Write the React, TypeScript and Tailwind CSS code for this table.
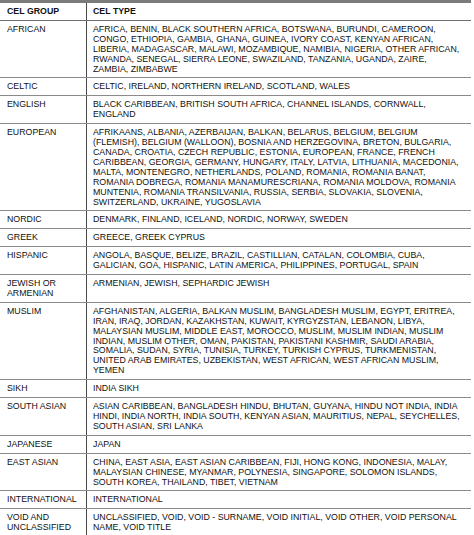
import React from "react";

type Row = { group: string[]; types: string[] };

const rows: Row[] = [
  {
    group: ["AFRICAN"],
    types: [
      "AFRICA, BENIN, BLACK SOUTHERN AFRICA, BOTSWANA, BURUNDI, CAMEROON,",
      "CONGO, ETHIOPIA, GAMBIA, GHANA, GUINEA, IVORY COAST, KENYAN AFRICAN,",
      "LIBERIA, MADAGASCAR, MALAWI, MOZAMBIQUE, NAMIBIA, NIGERIA, OTHER AFRICAN,",
      "RWANDA, SENEGAL, SIERRA LEONE, SWAZILAND, TANZANIA, UGANDA, ZAIRE,",
      "ZAMBIA, ZIMBABWE",
    ],
  },
  { group: ["CELTIC"], types: ["CELTIC, IRELAND, NORTHERN IRELAND, SCOTLAND, WALES"] },
  {
    group: ["ENGLISH"],
    types: ["BLACK CARIBBEAN, BRITISH SOUTH AFRICA, CHANNEL ISLANDS, CORNWALL,", "ENGLAND"],
  },
  {
    group: ["EUROPEAN"],
    types: [
      "AFRIKAANS, ALBANIA, AZERBAIJAN, BALKAN, BELARUS, BELGIUM, BELGIUM",
      "(FLEMISH), BELGIUM (WALLOON), BOSNIA AND HERZEGOVINA, BRETON, BULGARIA,",
      "CANADA, CROATIA, CZECH REPUBLIC, ESTONIA, EUROPEAN, FRANCE, FRENCH",
      "CARIBBEAN, GEORGIA, GERMANY, HUNGARY, ITALY, LATVIA, LITHUANIA, MACEDONIA,",
      "MALTA, MONTENEGRO, NETHERLANDS, POLAND, ROMANIA, ROMANIA BANAT,",
      "ROMANIA DOBREGA, ROMANIA MANAMURESCRIANA, ROMANIA MOLDOVA, ROMANIA",
      "MUNTENIA, ROMANIA TRANSILVANIA, RUSSIA, SERBIA, SLOVAKIA, SLOVENIA,",
      "SWITZERLAND, UKRAINE, YUGOSLAVIA",
    ],
  },
  { group: ["NORDIC"], types: ["DENMARK, FINLAND, ICELAND, NORDIC, NORWAY, SWEDEN"] },
  { group: ["GREEK"], types: ["GREECE, GREEK CYPRUS"] },
  {
    group: ["HISPANIC"],
    types: [
      "ANGOLA, BASQUE, BELIZE, BRAZIL, CASTILLIAN, CATALAN, COLOMBIA, CUBA,",
      "GALICIAN, GOA, HISPANIC, LATIN AMERICA, PHILIPPINES, PORTUGAL, SPAIN",
    ],
  },
  { group: ["JEWISH OR", "ARMENIAN"], types: ["ARMENIAN, JEWISH, SEPHARDIC JEWISH"] },
  {
    group: ["MUSLIM"],
    types: [
      "AFGHANISTAN, ALGERIA, BALKAN MUSLIM, BANGLADESH MUSLIM, EGYPT, ERITREA,",
      "IRAN, IRAQ, JORDAN, KAZAKHSTAN, KUWAIT, KYRGYZSTAN, LEBANON, LIBYA,",
      "MALAYSIAN MUSLIM, MIDDLE EAST, MOROCCO, MUSLIM, MUSLIM INDIAN, MUSLIM",
      "INDIAN, MUSLIM OTHER, OMAN, PAKISTAN, PAKISTANI KASHMIR, SAUDI ARABIA,",
      "SOMALIA, SUDAN, SYRIA, TUNISIA, TURKEY, TURKISH CYPRUS, TURKMENISTAN,",
      "UNITED ARAB EMIRATES, UZBEKISTAN, WEST AFRICAN, WEST AFRICAN MUSLIM,",
      "YEMEN",
    ],
  },
  { group: ["SIKH"], types: ["INDIA SIKH"] },
  {
    group: ["SOUTH ASIAN"],
    types: [
      "ASIAN CARIBBEAN, BANGLADESH HINDU, BHUTAN, GUYANA, HINDU NOT INDIA, INDIA",
      "HINDI, INDIA NORTH, INDIA SOUTH, KENYAN ASIAN, MAURITIUS, NEPAL, SEYCHELLES,",
      "SOUTH ASIAN, SRI LANKA",
    ],
  },
  { group: ["JAPANESE"], types: ["JAPAN"] },
  {
    group: ["EAST ASIAN"],
    types: [
      "CHINA, EAST ASIA, EAST ASIAN CARIBBEAN, FIJI, HONG KONG, INDONESIA, MALAY,",
      "MALAYSIAN CHINESE, MYANMAR, POLYNESIA, SINGAPORE, SOLOMON ISLANDS,",
      "SOUTH KOREA, THAILAND, TIBET, VIETNAM",
    ],
  },
  { group: ["INTERNATIONAL"], types: ["INTERNATIONAL"] },
  {
    group: ["VOID AND", "UNCLASSIFIED"],
    types: [
      "UNCLASSIFIED, VOID, VOID - SURNAME, VOID INITIAL, VOID OTHER, VOID PERSONAL",
      "NAME, VOID TITLE",
    ],
  },
];

function Lines({ lines }: { lines: string[] }) {
  return (
    <>
      {lines.map((l, i) => (
        <div key={i} className="whitespace-nowrap">
          {l}
        </div>
      ))}
    </>
  );
}

export default function App() {
  return (
    <div
      className="w-[474px] h-[535px] overflow-hidden bg-white text-[#111111] text-[8.8px] leading-[9.9px]"
      style={{ fontFamily: '"Liberation Sans", Arial, sans-serif' }}
    >
      <div className="w-[471px] border-t-[3px] border-[#7b7b7b]">
        <div className="grid grid-cols-[87px_1fr] border-b border-[#6e6e6e] font-bold">
          <div className="pl-[7px] pt-[4px] pb-[3px] border-r border-[#4a4a4a]">CEL GROUP</div>
          <div className="pl-[6px] pt-[4px] pb-[3px]">CEL TYPE</div>
        </div>
        {rows.map((r, i) => (
          <div key={i} className="grid grid-cols-[87px_1fr] border-b border-[#8a8a8a]">
            <div className="pl-[7px] pt-[4px] pb-[3px] border-r border-[#4a4a4a]">
              <Lines lines={r.group} />
            </div>
            <div className="pl-[6px] pt-[4px] pb-[3px]">
              <Lines lines={r.types} />
            </div>
          </div>
        ))}
      </div>
    </div>
  );
}
